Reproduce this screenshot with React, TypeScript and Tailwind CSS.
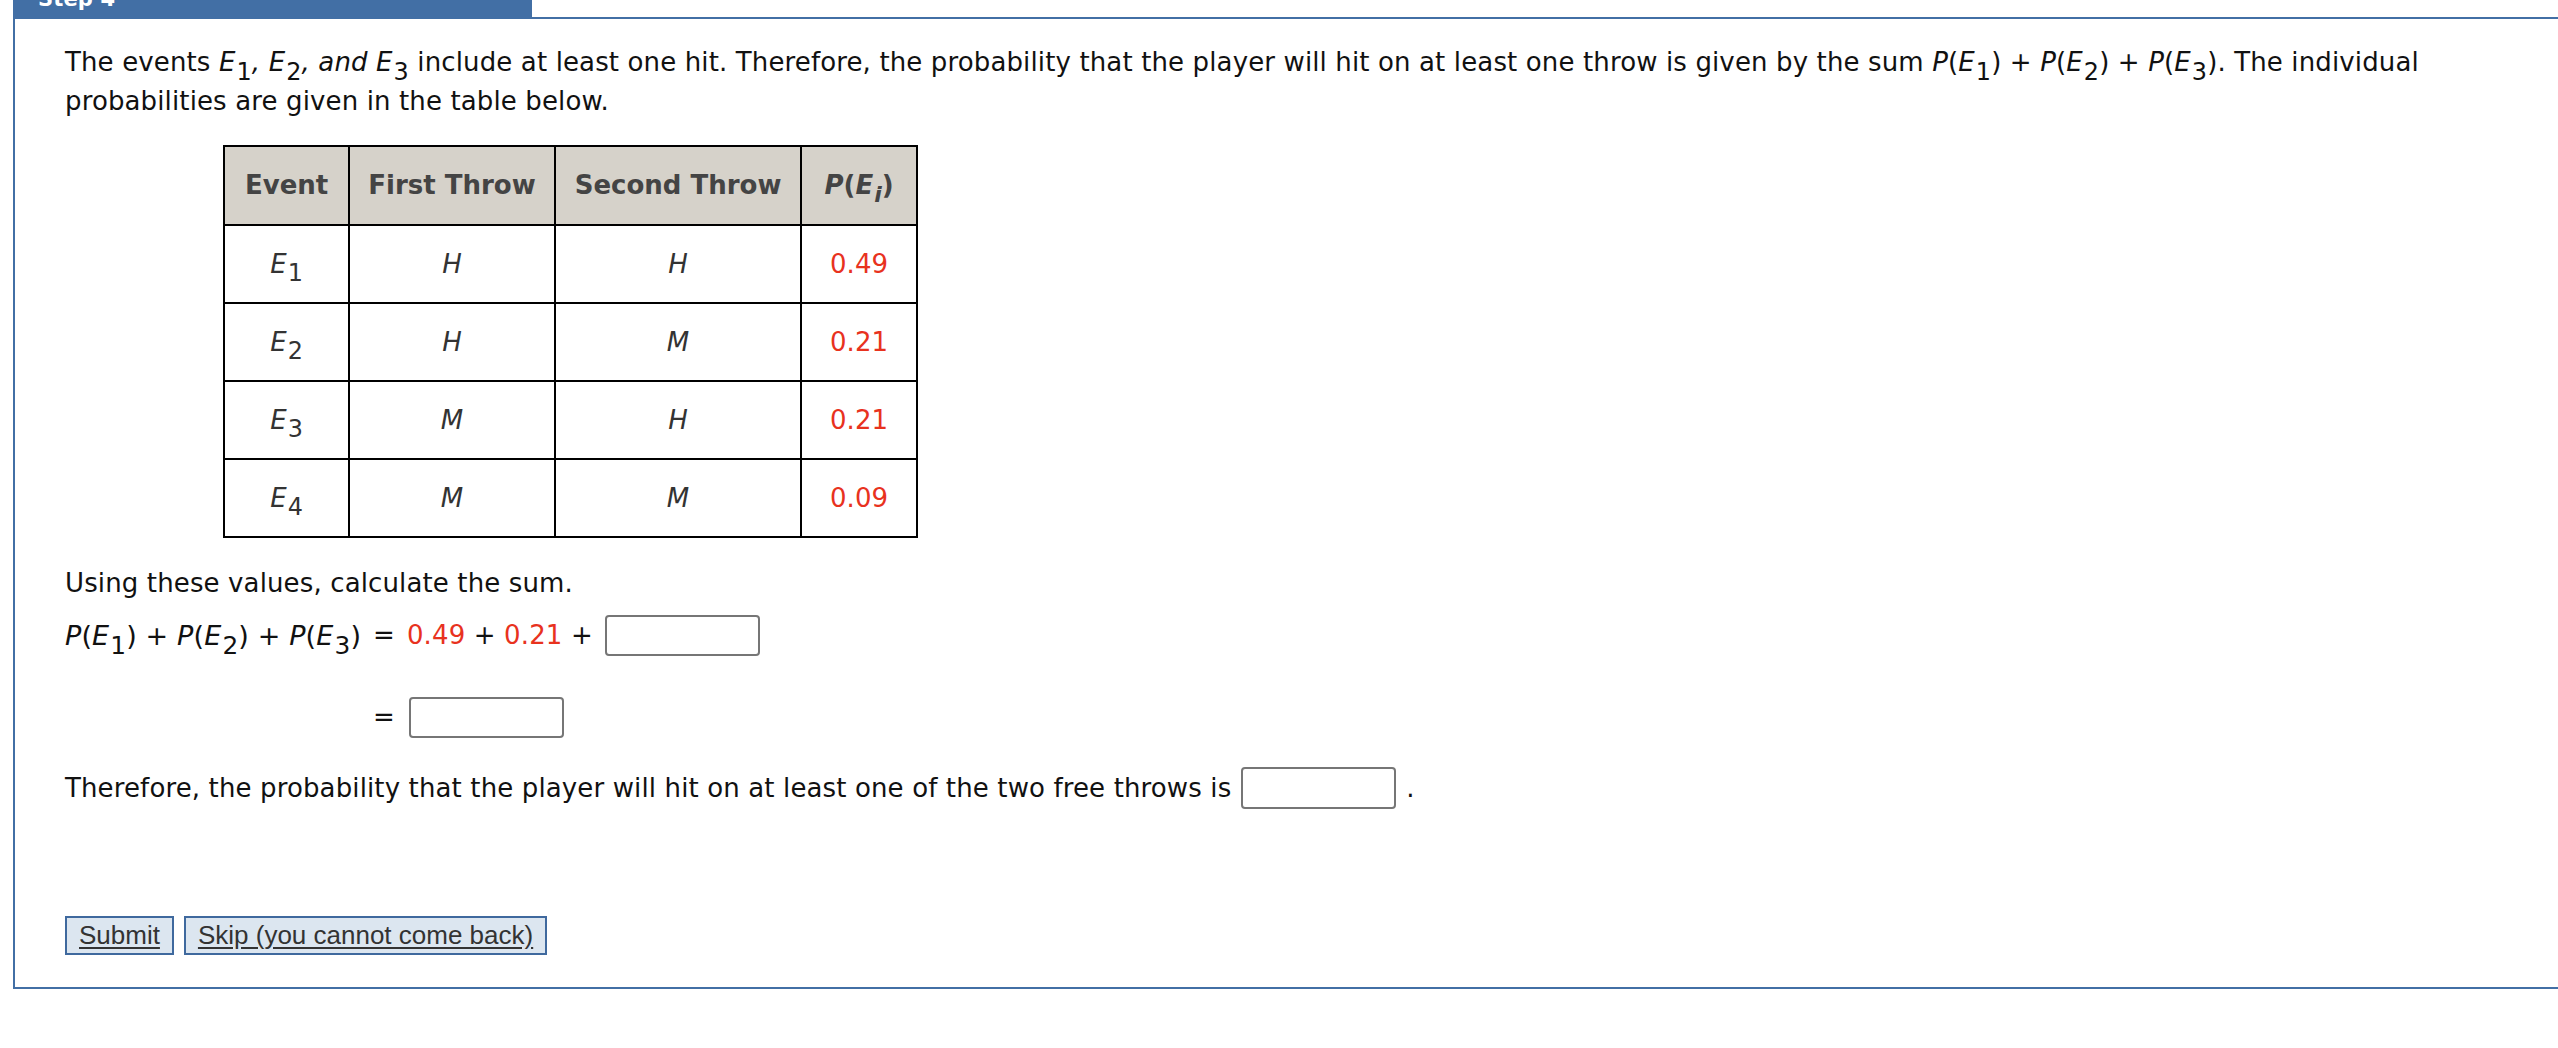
import React from "react";

const Sub = ({ children }: { children: React.ReactNode }) => (
  <sub className="text-[0.92em] bottom-[-0.36em] not-italic ml-[1px]">{children}</sub>
);

const E = ({ n }: { n: string }) => (
  <>
    <i>E</i>
    <Sub>{n}</Sub>
  </>
);

const PE = ({ n }: { n: string }) => (
  <span className="whitespace-nowrap">
    <i>P</i>(<i>E</i>
    <Sub>{n}</Sub>)
  </span>
);

const Red = ({ children }: { children: React.ReactNode }) => (
  <span className="text-[#e8321e]">{children}</span>
);

const Box = ({ className = "" }: { className?: string }) => (
  <span
    className={
      "inline-block w-[155px] h-[41px] border-2 border-[#767676] rounded-[4px] bg-white " +
      className
    }
  />
);

const rows = [
  { n: "1", a: "H", b: "H", p: "0.49" },
  { n: "2", a: "H", b: "M", p: "0.21" },
  { n: "3", a: "M", b: "H", p: "0.21" },
  { n: "4", a: "M", b: "M", p: "0.09" },
];

export default function App() {
  return (
    <div className="min-h-screen bg-white pl-[13px] font-['Verdana','DejaVu_Sans',sans-serif] text-[26px] leading-[39px] tracking-[0.13px] text-[#111]">
      <div className="w-[519px] h-[17px] bg-[#426fa5] overflow-hidden">
        <div className="-mt-[14px] pl-[25px] text-white font-bold text-[21px] leading-[26px]">
          Step 4
        </div>
      </div>
      <div className="border-t-2 border-l-2 border-b-2 border-[#426fa5] pl-[50px] pr-[50px] pt-[24px] pb-[32px]">
        <p>
          The events{" "}
          <i>
            E<Sub>1</Sub>, E<Sub>2</Sub>, and E<Sub>3</Sub>
          </i>{" "}
          include at least one hit. Therefore, the probability that the player will hit on at least
          one throw is given by the sum <PE n="1" /> + <PE n="2" /> + <PE n="3" />. The individual
          probabilities are given in the table below.
        </p>

        <table className="mt-[24px] ml-[158px] border-collapse text-center text-[#333] tracking-normal">
          <thead>
            <tr className="bg-[#d6d2ca] text-[#444]">
              <th className="border-2 border-black px-5 py-[19px] font-bold">Event</th>
              <th className="border-2 border-black px-[18px] py-[19px] font-bold">First Throw</th>
              <th className="border-2 border-black px-[19px] py-[19px] font-bold">Second Throw</th>
              <th className="border-2 border-black px-[22px] py-[19px] font-bold">
                <i>P</i>(<i>E</i>
                <sub className="text-[22px] bottom-[-0.38em] ml-[1px]">
                  <i>i</i>
                </sub>
                )
              </th>
            </tr>
          </thead>
          <tbody>
            {rows.map((r) => (
              <tr key={r.n}>
                <td className="border-2 border-black px-5 py-[18.5px]">
                  <E n={r.n} />
                </td>
                <td className="border-2 border-black px-[18px] py-[18.5px]">
                  <i>{r.a}</i>
                </td>
                <td className="border-2 border-black px-[19px] py-[18.5px]">
                  <i>{r.b}</i>
                </td>
                <td className="border-2 border-black px-[22px] py-[18.5px]">
                  <Red>{r.p}</Red>
                </td>
              </tr>
            ))}
          </tbody>
        </table>

        <p className="mt-[26px]">Using these values, calculate the sum.</p>

        <div className="mt-[12px] flex items-center h-[41px]">
          <div className="w-[302px] flex justify-start whitespace-nowrap text-[27px]">
            <PE n="1" />
            &nbsp;+&nbsp;
            <PE n="2" />
            &nbsp;+&nbsp;
            <PE n="3" />
          </div>
          <span className="ml-[6px]">=</span>
          <span className="ml-[12px] whitespace-nowrap">
            <Red>0.49</Red> + <Red>0.21</Red> +
          </span>
          <Box className="ml-[12px]" />
        </div>

        <div className="mt-[41px] flex items-center h-[41px]">
          <div className="w-[302px]" />
          <span className="ml-[6px]">=</span>
          <Box className="ml-[14px]" />
        </div>

        <div className="mt-[29px] flex items-center h-[42px]">
          <span className="whitespace-nowrap">
            Therefore, the probability that the player will hit on at least one of the two free
            throws is
          </span>
          <Box className="ml-[10px] h-[42px]" />
          <span className="ml-[10px]">.</span>
        </div>

        <div className="mt-[107px] flex gap-[10px] font-['Liberation_Sans',Arial,sans-serif] text-[26px] leading-[30px] tracking-normal text-[#333]">
          <button className="h-[39px] px-[12px] pb-[1px] border-2 border-[#3f699e] bg-[#dce6f0] underline underline-offset-[3px]">
            Submit
          </button>
          <button className="h-[39px] px-[12px] pb-[1px] border-2 border-[#3f699e] bg-[#dce6f0] underline underline-offset-[3px]">
            Skip (you cannot come back)
          </button>
        </div>
      </div>
    </div>
  );
}
